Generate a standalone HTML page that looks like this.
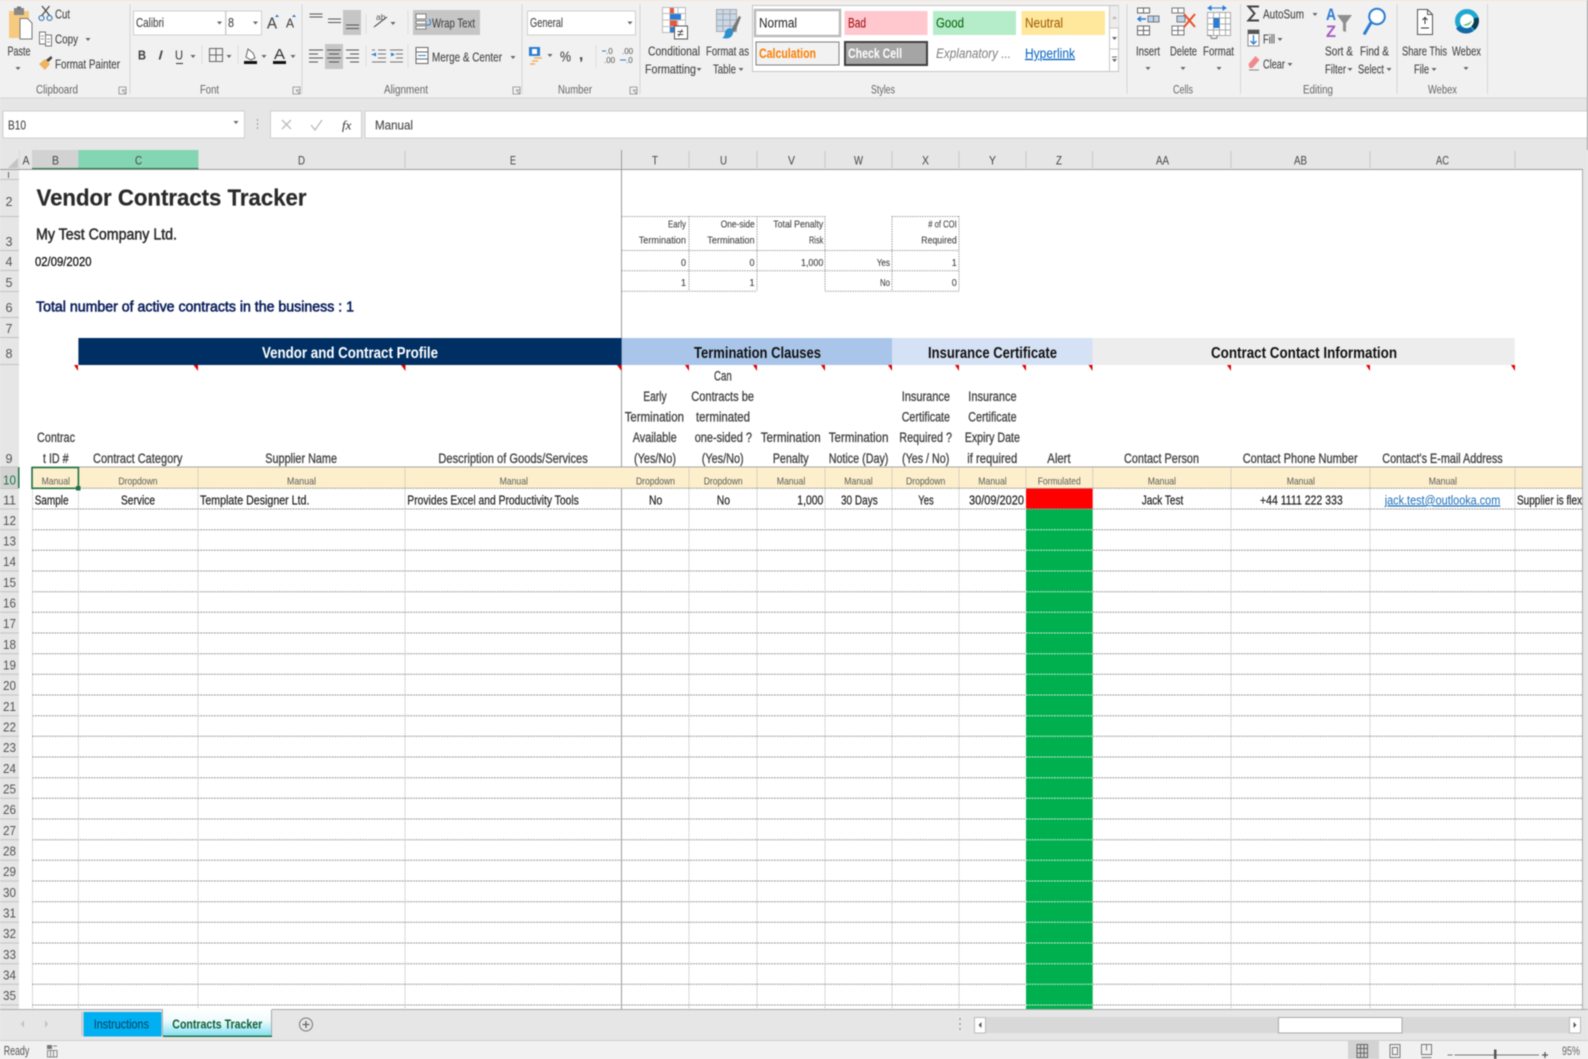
<!DOCTYPE html>
<html><head><meta charset="utf-8"><title>Vendor Contracts Tracker</title>
<style>
html,body{margin:0;padding:0;background:#f1f1f1;overflow:hidden}
svg{display:block;filter:blur(.4px)}
text{font-family:"Liberation Sans",Arial,sans-serif;white-space:pre;transform:translateY(-.2px)}
.r text{font-size:12.5px;fill:#444;stroke:#444;stroke-width:.1}
.lb text{font-size:11.5px;fill:#666}
.h text{font-size:12px;fill:#444}
.rn text{font-size:12.5px;fill:#555}
.hd text{font-size:13.5px;fill:#404040;stroke:#404040;stroke-width:.3}
.m text{font-size:10.5px;fill:#444;stroke:#444;stroke-width:.12}
.s text{font-size:10.5px;fill:#5a5a5a}
.d text{font-size:13px;fill:#222;stroke:#222;stroke-width:.2}
.sec text{font-size:16px;font-weight:bold;fill:#111}
</style></head><body>
<svg xmlns="http://www.w3.org/2000/svg" width="1588" height="1059" viewBox="0 0 1588 1059">
<defs>
<path id="a" d="M-2.5 0h5l-2.5 3z" fill="#666"/>
<path id="l" d="M0 0h7v7H0z M3 3h4 M3 3l4 4" fill="none" stroke="#888" stroke-width=".8"/>
</defs>
<!-- backgrounds -->
<rect width="1588" height="1059" fill="#f1f1f1"/>
<rect width="1588" height="1" fill="#f5e6da"/>
<rect y="98" width="1588" height="72" fill="#e6e6e6"/>
<rect y="97.500" width="1588" height="1" fill="#d4d4d4"/>
<rect x="3" y="111" width="241.500" height="27" fill="#fff" stroke="#cfcfcf"/>
<rect x="270.500" y="111" width="91" height="27" fill="#fff" stroke="#cfcfcf"/>
<rect x="365" y="111" width="1223" height="27" fill="#fff" stroke="#cfcfcf"/>
<!-- ribbon group separators -->
<path d="M130 4V94M302 4V94M522 4V94M640 4V94M1127 4V94M1240.500 4V94M1397 4V94M1487.500 4V94" stroke="#d6d6d6" fill="none"/>
<path d="M202 45V64M238 45V64M366 14V34M366 46V66M408 10V34M408 44V68M596 45V68" stroke="#dcdcdc" fill="none"/>
<rect x="1587" y="0" width="1" height="168" fill="#999"/>

<!-- clipboard icons -->
<rect x="9" y="11" width="20" height="27" fill="#f6ca80"/>
<rect x="14" y="8" width="10" height="7" fill="#888"/>
<rect x="17" y="6.500" width="4" height="3" fill="#777"/>
<path d="M20 18.500h7.500l4.500 4.500v16H20z" fill="#fff" stroke="#777"/>
<path d="M42 6l8 10M49.500 6l-8 10" stroke="#444" stroke-width="1.200" fill="none"/>
<circle cx="41.500" cy="18" r="2.500" fill="none" stroke="#2b6fb3" stroke-width="1.100"/>
<circle cx="49.500" cy="18" r="2.500" fill="none" stroke="#2b6fb3" stroke-width="1.100"/>
<path d="M39.500 32h6v12h-6zM45.500 35h6v11h-6z" fill="#fff" stroke="#777"/>
<path d="M41 36h3M41 39h3M47 39h3M47 42h3" stroke="#999"/>
<path d="M39 64l6-5 5 5-5 6z" fill="#eeb461"/>
<path d="M46 60l5-4 1.500 2-4 4z" fill="#444"/>

<!-- font controls -->
<rect x="133.500" y="11" width="92" height="24" fill="#fff" stroke="#cfcfcf"/>
<rect x="226" y="11" width="35.500" height="24" fill="#fff" stroke="#cfcfcf"/>
<rect x="527.500" y="11" width="108" height="24" fill="#fff" stroke="#cfcfcf"/>
<use href="#a" x="219.500" y="21.500"/><use href="#a" x="255.500" y="21.500"/><use href="#a" x="630" y="21.500"/>
<path d="M275 17l2-2.500 2 2.500zM292 17l2-2.500 2 2.500z" fill="#2b7cd3"/>

<!-- alignment highlights -->
<rect x="343" y="10" width="18" height="25" fill="#c6c6c6"/>
<rect x="325" y="44" width="18" height="25" fill="#c6c6c6"/>
<rect x="413" y="10" width="67" height="25" fill="#c6c6c6"/>
<path d="M309.500 14h13M309.500 17h13M328 19h13M328 22.500h13M346 25h13M346 28.500h13" stroke="#555" fill="none"/>
<path d="M309 50h14M309 54h9M309 58h14M309 62h9M327 50h14M329 54h10M327 58h14M329 62h10M346 50h13M350 54h9M346 58h13M350 62h9" stroke="#555" fill="none"/>
<text x="376" y="20" transform="rotate(-45 380 18)" style="font-size:8.500px" fill="#555">ab</text>
<path d="M374 27l13-10" stroke="#444" fill="none"/>
<use href="#a" x="393" y="22"/>
<path d="M416 14h10v5h-10zM416 21h10v3h-10zM416 26h10v3h-10z" fill="#fff" stroke="#666" stroke-width=".8"/>
<path d="M426 25h3c2 0 2-4 0-6" stroke="#2b7cd3" fill="none"/>
<path d="M378 50h8M378 54h8M378 58h8M372 62h14M372 50h3" stroke="#777" fill="none"/>
<path d="M376 52.500l-4 2 4 2z" fill="#2b7cd3"/><path d="M371.500 54.500h4" stroke="#2b7cd3"/>
<path d="M390 50h13M396 54h7M396 58h7M390 62h13" stroke="#777" fill="none"/>
<path d="M391 52.500l4 2-4 2z" fill="#2b7cd3"/>
<path d="M416 47.500h12v16h-12zM416 52h12M416 59h12" stroke="#666" fill="#fff"/>
<path d="M418 55.500h8" stroke="#2b7cd3"/>
<use href="#a" x="513" y="56"/>

<!-- font row 2 icons -->
<path d="M209.500 48.500h13v13h-13zM216 48.500v13M209.500 55h13" fill="none" stroke="#666"/>
<use href="#a" x="193" y="55"/><use href="#a" x="229" y="55"/><use href="#a" x="264" y="55"/><use href="#a" x="293" y="55"/>
<path d="M248 49l5 4 2 5-4 2-5-3z" fill="#fff" stroke="#666"/>
<rect x="244" y="61" width="13" height="3" fill="#111"/>
<rect x="273" y="61" width="13" height="3" fill="#111"/>
<text x="274" y="59" font-size="15" fill="#333" textLength="11" lengthAdjust="spacingAndGlyphs">A</text>
<path d="M176 63.500h7" stroke="#333"/>

<!-- number icons -->
<rect x="529" y="47" width="11" height="9" fill="#2b7cd3"/><rect x="532" y="49" width="5" height="5" fill="#fff"/>
<path d="M534 58h8M532 61h6M530 64h5" stroke="#eeb461" stroke-width="1.500"/>
<use href="#a" x="550" y="54"/>
<text x="606" y="54" font-size="8" fill="#555">.0</text><text x="604" y="63" font-size="8" fill="#555">.00</text>
<text x="622" y="54" font-size="8" fill="#555">.00</text><text x="626" y="63" font-size="8" fill="#555">.0</text>
<path d="M602 51h4M620 60h6" stroke="#2b7cd3"/>

<!-- Conditional formatting -->
<path d="M662.500 7.500h23v25h-23zM670 7.500v25M678 7.500v25M662.500 13.500h23M662.500 20h23M662.500 26.500h23" fill="#fff" stroke="#bbb"/>
<rect x="670" y="8" width="4" height="5.500" fill="#e8593c"/>
<rect x="670" y="14" width="11" height="5.500" fill="#2b7cd3"/>
<rect x="670" y="20.500" width="7" height="5.500" fill="#e8593c"/>
<rect x="670" y="27" width="4" height="5.500" fill="#2b7cd3"/>
<rect x="674.500" y="26" width="13" height="13" fill="#fff" stroke="#555"/>
<text x="677" y="37" font-size="12" fill="#333">≠</text>
<!-- Format as table -->
<path d="M716.500 9.500h20v22h-20zM723 9.500v22M730 9.500v22M716.500 14h20M716.500 20h20M716.500 26h20" fill="#c9d9ec" stroke="#aaa"/>
<path d="M731 30l8-14 2 1-6 15z" fill="#777"/>
<path d="M725 32c2-5 7-4 8-2 1 3-1 7-4 8-3 1-6 0-7 0 2-1 3-3 3-6z" fill="#2b8fd0"/>

<!-- Style gallery -->
<rect x="752.500" y="5.500" width="366" height="66" fill="#fff" stroke="#c6c6c6"/>
<rect x="755" y="10" width="85" height="26" fill="#fff" stroke="#bcbcbc" stroke-width="2.500"/>
<rect x="844.500" y="11" width="83" height="24" fill="#ffc7ce"/>
<rect x="933" y="11" width="83" height="24" fill="#b5ecca"/>
<rect x="1021.500" y="11" width="83.500" height="24" fill="#ffe79b"/>
<rect x="756" y="42" width="83" height="23" fill="#f2f2f2" stroke="#7f7f7f"/>
<rect x="845" y="42" width="82" height="23" fill="#a5a5a5" stroke="#3f3f3f" stroke-width="2"/>
<path d="M1109.500 5.500v66M1109.500 28h9.500M1109.500 49h9.500" stroke="#c6c6c6" fill="none"/>
<rect x="1110" y="6" width="8.500" height="21.500" fill="#ececec"/>
<path d="M1112 19l2.500-3 2.500 3z" fill="#bbb"/>
<use href="#a" x="1114.500" y="37"/>
<path d="M1112 57h5" stroke="#666"/><use href="#a" x="1114.500" y="59"/>

<!-- Cells icons -->
<path d="M1137.500 8h12v5h-12zM1143.500 8v5M1137.500 26h12v9h-12zM1143.500 26v9M1137.500 30.500h12" fill="#fff" stroke="#666"/>
<path d="M1148 16h11v6h-11zM1153.500 16v6" fill="#bcd5ee" stroke="#777"/>
<path d="M1146 19h-8M1141 16.500l-3 2.500 3 2.500" stroke="#2b7cd3" stroke-width="1.400" fill="none"/>
<path d="M1172 8h12v5h-12zM1178 8v5M1172 26h12v9h-12zM1178 26v9M1172 30.500h12" fill="#fff" stroke="#777"/>
<rect x="1177" y="16" width="8" height="6" fill="#bcd5ee" stroke="#777"/>
<path d="M1184 14l11 13M1195 14l-11 13" stroke="#e8502a" stroke-width="2" fill="none"/>
<path d="M1208 8h18M1208 8l3-2v4zM1226 8l-3-2v4z" stroke="#2b7cd3" fill="#2b7cd3"/>
<path d="M1207.500 12.500h23v23h-23zM1213.500 12.500v23M1219.500 12.500v23M1225.500 12.500v23M1207.500 18h23M1207.500 24h23M1207.500 30h23" fill="#fff" stroke="#aaa"/>
<rect x="1213.500" y="18" width="6" height="10" fill="#2b7cd3"/>
<path d="M1207.500 35.500h3l1 3h5l1-3" stroke="#777" fill="none"/>

<!-- Editing icons -->
<path d="M1259 6.500H1248.500L1254.500 13.500L1248.500 20.500H1259" stroke="#444" stroke-width="2" fill="none"/>
<use href="#a" x="1315" y="13"/>
<rect x="1248" y="30" width="11" height="16" fill="#fff" stroke="#888"/>
<rect x="1248" y="30" width="11" height="4" fill="#555"/>
<path d="M1253.500 35v9M1250.500 41l3 3 3-3" stroke="#2b7cd3" stroke-width="1.300" fill="none"/>
<use href="#a" x="1280" y="38"/>
<path d="M1248.500 64l7-8 4 4-7 8h-3z" fill="#f08a8a"/>
<path d="M1249 70h10" stroke="#888"/>
<use href="#a" x="1290" y="63"/>
<text x="1326" y="20" font-size="17" font-weight="bold" fill="#2b7cd3" textLength="10" lengthAdjust="spacingAndGlyphs">A</text>
<text x="1326" y="37" font-size="17" font-weight="bold" fill="#a45fc4" textLength="10" lengthAdjust="spacingAndGlyphs">Z</text>
<path d="M1337 15h15l-6 8v9l-3-1v-8z" fill="#8f8f8f"/>
<circle cx="1377" cy="16.500" r="7.800" fill="#fff" stroke="#2b7cd3" stroke-width="2"/>
<path d="M1371 22.500l-7 12" stroke="#2b7cd3" stroke-width="3" fill="none"/>

<!-- Share / Webex -->
<path d="M1417.500 9.500h10l5 5v20h-15z" fill="#fff" stroke="#555"/>
<path d="M1427.500 9.500v5h5" fill="none" stroke="#555"/>
<path d="M1425 24v-6M1422.500 20l2.500-2.500 2.500 2.500M1421 28h8" stroke="#333" fill="none"/>
<circle cx="1467" cy="21" r="9.500" fill="#fff" stroke="#20a9cf" stroke-width="5"/>
<path d="M1458 27a10 10 0 0 0 14 2" stroke="#1468a8" stroke-width="5" fill="none"/>
<path d="M1473 28a10 10 0 0 0 3-10" stroke="#0b3a52" stroke-width="5" fill="none"/>
<path d="M1463 25a6 6 0 0 0 7-1 8 8 0 0 0 2-4c-2 3-6 4-9 5z" fill="#6bbd6a"/>

<!-- ribbon arrows -->
<use href="#a" x="18" y="67"/><use href="#a" x="88" y="38"/>
<use href="#a" x="1148" y="67"/><use href="#a" x="1183" y="67"/><use href="#a" x="1219" y="67"/><use href="#a" x="1466" y="67"/>
<use href="#a" x="699" y="68"/><use href="#a" x="741" y="68"/><use href="#a" x="1350" y="68"/><use href="#a" x="1389" y="68"/><use href="#a" x="1434" y="68"/>
<use href="#l" x="119" y="87"/><use href="#l" x="293" y="87"/><use href="#l" x="513" y="87"/><use href="#l" x="630" y="87"/>

<!-- ribbon text -->
<g class="r">
<text x="55" y="18.500" textLength="15" lengthAdjust="spacingAndGlyphs">Cut</text>
<text x="55" y="43.500" textLength="23" lengthAdjust="spacingAndGlyphs">Copy</text>
<text x="55" y="68.500" textLength="65" lengthAdjust="spacingAndGlyphs">Format Painter</text>
<text x="7.500" y="55.500" textLength="23" lengthAdjust="spacingAndGlyphs">Paste</text>
<text x="136" y="27" textLength="28" lengthAdjust="spacingAndGlyphs">Calibri</text>
<text x="228" y="27" textLength="6" lengthAdjust="spacingAndGlyphs">8</text>
<text x="267" y="28.500" style="font-size:16px" textLength="10" lengthAdjust="spacingAndGlyphs">A</text>
<text x="286" y="27.500" style="font-size:13px" textLength="8" lengthAdjust="spacingAndGlyphs">A</text>
<text x="138" y="59.500" style="font-weight:bold" textLength="8" lengthAdjust="spacingAndGlyphs">B</text>
<text x="158" y="59.500" style="font-style:italic" textLength="5" lengthAdjust="spacingAndGlyphs">I</text>
<text x="175" y="59.500" textLength="8" lengthAdjust="spacingAndGlyphs">U</text>
<text x="432" y="27.500" textLength="43" lengthAdjust="spacingAndGlyphs">Wrap Text</text>
<text x="432" y="61.500" textLength="70" lengthAdjust="spacingAndGlyphs">Merge &amp; Center</text>
<text x="530" y="27" textLength="33" lengthAdjust="spacingAndGlyphs">General</text>
<text x="560" y="61.500" style="font-size:15px" textLength="11" lengthAdjust="spacingAndGlyphs">%</text>
<text x="579" y="59.500" style="font-size:15px;font-weight:bold">,</text>
<text x="648" y="55.500" textLength="52" lengthAdjust="spacingAndGlyphs">Conditional</text>
<text x="645" y="73.500" textLength="51" lengthAdjust="spacingAndGlyphs">Formatting</text>
<text x="706" y="55.500" textLength="43" lengthAdjust="spacingAndGlyphs">Format as</text>
<text x="713" y="73.500" textLength="23" lengthAdjust="spacingAndGlyphs">Table</text>
<text x="1136" y="55.500" textLength="24" lengthAdjust="spacingAndGlyphs">Insert</text>
<text x="1170" y="55.500" textLength="27" lengthAdjust="spacingAndGlyphs">Delete</text>
<text x="1203" y="55.500" textLength="31" lengthAdjust="spacingAndGlyphs">Format</text>
<text x="1263" y="18.500" textLength="41" lengthAdjust="spacingAndGlyphs">AutoSum</text>
<text x="1263" y="43.500" textLength="12" lengthAdjust="spacingAndGlyphs">Fill</text>
<text x="1263" y="68.500" textLength="22" lengthAdjust="spacingAndGlyphs">Clear</text>
<text x="1325" y="55.500" textLength="28" lengthAdjust="spacingAndGlyphs">Sort &amp;</text>
<text x="1325" y="73.500" textLength="21" lengthAdjust="spacingAndGlyphs">Filter</text>
<text x="1360" y="55.500" textLength="29" lengthAdjust="spacingAndGlyphs">Find &amp;</text>
<text x="1358" y="73.500" textLength="26" lengthAdjust="spacingAndGlyphs">Select</text>
<text x="1402" y="55.500" textLength="45" lengthAdjust="spacingAndGlyphs">Share This</text>
<text x="1414" y="73.500" textLength="15" lengthAdjust="spacingAndGlyphs">File</text>
<text x="1452" y="55.500" textLength="29" lengthAdjust="spacingAndGlyphs">Webex</text>
</g>
<!-- gallery text -->
<g>
<text x="759" y="27.500" style="font-size:13.500px" fill="#222" textLength="38" lengthAdjust="spacingAndGlyphs">Normal</text>
<text x="848" y="27.500" style="font-size:13.500px" fill="#9c0006" textLength="18" lengthAdjust="spacingAndGlyphs">Bad</text>
<text x="936" y="27.500" style="font-size:13.500px" fill="#006100" textLength="28" lengthAdjust="spacingAndGlyphs">Good</text>
<text x="1025" y="27.500" style="font-size:13.500px" fill="#9c5700" textLength="38" lengthAdjust="spacingAndGlyphs">Neutral</text>
<text x="759" y="58" style="font-size:13.500px;font-weight:bold" fill="#fa7d00" textLength="57" lengthAdjust="spacingAndGlyphs">Calculation</text>
<text x="848" y="58" style="font-size:13.500px;font-weight:bold" fill="#fff" textLength="54" lengthAdjust="spacingAndGlyphs">Check Cell</text>
<text x="936" y="58" style="font-size:13.500px;font-style:italic" fill="#7f7f7f" textLength="75" lengthAdjust="spacingAndGlyphs">Explanatory ...</text>
<text x="1025" y="58" style="font-size:13.500px;text-decoration:underline" fill="#0563c1" textLength="50" lengthAdjust="spacingAndGlyphs">Hyperlink</text>
</g>
<g class="lb">
<text x="36" y="93.500" textLength="42" lengthAdjust="spacingAndGlyphs">Clipboard</text>
<text x="200" y="93.500" textLength="19" lengthAdjust="spacingAndGlyphs">Font</text>
<text x="384" y="93.500" textLength="44" lengthAdjust="spacingAndGlyphs">Alignment</text>
<text x="558" y="93.500" textLength="34" lengthAdjust="spacingAndGlyphs">Number</text>
<text x="871" y="93.500" textLength="24" lengthAdjust="spacingAndGlyphs">Styles</text>
<text x="1173" y="93.500" textLength="20" lengthAdjust="spacingAndGlyphs">Cells</text>
<text x="1303" y="93.500" textLength="30" lengthAdjust="spacingAndGlyphs">Editing</text>
<text x="1428" y="93.500" textLength="29" lengthAdjust="spacingAndGlyphs">Webex</text>
</g>

<!-- formula bar -->
<g class="r">
<text x="8" y="129.500" style="font-size:13px" textLength="18" lengthAdjust="spacingAndGlyphs">B10</text>
<text x="375" y="129.500" style="font-size:13px" textLength="38" lengthAdjust="spacingAndGlyphs">Manual</text>
<text x="342" y="129.500" style="font-size:13px;font-style:italic;font-family:'Liberation Serif',serif">fx</text>
</g>
<use href="#a" x="236" y="121"/>
<path d="M257.500 119v2M257.500 123v2M257.500 127v2" stroke="#999"/>
<path d="M282 120l9 9M291 120l-9 9" stroke="#bbb" stroke-width="1.300"/>
<path d="M311 125l4 5 7-10" stroke="#bbb" stroke-width="1.300" fill="none"/>

<!-- sheet -->
<rect x="19" y="170" width="1563" height="839.500" fill="#fff"/>
<rect x="1582" y="150" width="6" height="860" fill="#e6e6e6"/>
<rect x="1582" y="169" width="1" height="841" fill="#aaa"/>
<!-- col headers -->
<rect x="32" y="150" width="46.400" height="19" fill="#d2d2d2"/>
<rect x="78.400" y="150" width="120" height="19" fill="#84d5b1"/>
<rect x="32" y="168" width="166.400" height="1.500" fill="#217346"/>
<path d="M8 168l10-10v10z" fill="#c4c4c4"/>
<path d="M405 151V168M689 151V168M757 151V168M825 151V168M892 151V168M959 151V168M1026 151V168M1092.500 151V168M1231 151V168M1370 151V168M1515 151V168" stroke="#c8c8c8" fill="none"/>
<path d="M621.500 150V1009" stroke="#9a9a9a" fill="none"/>
<rect x="0" y="169" width="1583" height="1" fill="#9a9a9a"/>
<rect x="19" y="150" width="0.500" height="19" fill="#ccc"/>
<g class="h">
<text x="22.500" y="164.500" textLength="7" lengthAdjust="spacingAndGlyphs">A</text>
<text x="52" y="164.500" textLength="7" lengthAdjust="spacingAndGlyphs">B</text>
<text x="135" y="164.500" textLength="7" lengthAdjust="spacingAndGlyphs">C</text>
<text x="298" y="164.500" textLength="7" lengthAdjust="spacingAndGlyphs">D</text>
<text x="510" y="164.500" textLength="6" lengthAdjust="spacingAndGlyphs">E</text>
<text x="652" y="164.500" textLength="6" lengthAdjust="spacingAndGlyphs">T</text>
<text x="720" y="164.500" textLength="7" lengthAdjust="spacingAndGlyphs">U</text>
<text x="788" y="164.500" textLength="7" lengthAdjust="spacingAndGlyphs">V</text>
<text x="854" y="164.500" textLength="9" lengthAdjust="spacingAndGlyphs">W</text>
<text x="922" y="164.500" textLength="7" lengthAdjust="spacingAndGlyphs">X</text>
<text x="989" y="164.500" textLength="7" lengthAdjust="spacingAndGlyphs">Y</text>
<text x="1056" y="164.500" textLength="6" lengthAdjust="spacingAndGlyphs">Z</text>
<text x="1156" y="164.500" textLength="13" lengthAdjust="spacingAndGlyphs">AA</text>
<text x="1294" y="164.500" textLength="13" lengthAdjust="spacingAndGlyphs">AB</text>
<text x="1436" y="164.500" textLength="13" lengthAdjust="spacingAndGlyphs">AC</text>
</g>
<!-- row header -->
<rect x="0" y="170" width="19" height="839.500" fill="#e6e6e6"/>
<rect x="0" y="467" width="19" height="21.300" fill="#d2d2d2"/>
<rect x="18" y="467" width="1.500" height="21.300" fill="#217346"/>
<path d="M0 179.500H19M0 216.500H19M0 250.500H19M0 270.500H19M0 291.500H19M0 317.500H19M0 337.500H19M0 364.500H19M0 467H19M0 488.500H19M0 509H19M0 529.700H19M0 550.300H19M0 571H19M0 591.700H19M0 612.300H19M0 633H19M0 653.700H19M0 674.300H19M0 695H19M0 715.700H19M0 736.300H19M0 757H19M0 777.700H19M0 798.300H19M0 819H19M0 839.700H19M0 860.300H19M0 881H19M0 901.700H19M0 922.300H19M0 943H19M0 963.700H19M0 984.300H19M0 1005H19" stroke="#c2c2c2" fill="none"/>
<path d="M8.500 172v6" stroke="#666"/>
<g class="rn">
<text x="5.500" y="206" textLength="7" lengthAdjust="spacingAndGlyphs">2</text>
<text x="5.500" y="246" textLength="7" lengthAdjust="spacingAndGlyphs">3</text>
<text x="5.500" y="266" textLength="7" lengthAdjust="spacingAndGlyphs">4</text>
<text x="5.500" y="287" textLength="7" lengthAdjust="spacingAndGlyphs">5</text>
<text x="5.500" y="312" textLength="7" lengthAdjust="spacingAndGlyphs">6</text>
<text x="5.500" y="333" textLength="7" lengthAdjust="spacingAndGlyphs">7</text>
<text x="5.500" y="358" textLength="7" lengthAdjust="spacingAndGlyphs">8</text>
<text x="5.500" y="463" textLength="7" lengthAdjust="spacingAndGlyphs">9</text>
<text x="3" y="484.500" style="fill:#217346" textLength="13" lengthAdjust="spacingAndGlyphs">10</text>
<text x="3" y="504.500" textLength="13" lengthAdjust="spacingAndGlyphs">11</text>
<text x="3" y="525" textLength="13" lengthAdjust="spacingAndGlyphs">12</text>
<text x="3" y="545.700" textLength="13" lengthAdjust="spacingAndGlyphs">13</text>
<text x="3" y="566.300" textLength="13" lengthAdjust="spacingAndGlyphs">14</text>
<text x="3" y="587" textLength="13" lengthAdjust="spacingAndGlyphs">15</text>
<text x="3" y="607.700" textLength="13" lengthAdjust="spacingAndGlyphs">16</text>
<text x="3" y="628.300" textLength="13" lengthAdjust="spacingAndGlyphs">17</text>
<text x="3" y="649" textLength="13" lengthAdjust="spacingAndGlyphs">18</text>
<text x="3" y="669.700" textLength="13" lengthAdjust="spacingAndGlyphs">19</text>
<text x="3" y="690.300" textLength="13" lengthAdjust="spacingAndGlyphs">20</text>
<text x="3" y="711" textLength="13" lengthAdjust="spacingAndGlyphs">21</text>
<text x="3" y="731.700" textLength="13" lengthAdjust="spacingAndGlyphs">22</text>
<text x="3" y="752.300" textLength="13" lengthAdjust="spacingAndGlyphs">23</text>
<text x="3" y="773" textLength="13" lengthAdjust="spacingAndGlyphs">24</text>
<text x="3" y="793.700" textLength="13" lengthAdjust="spacingAndGlyphs">25</text>
<text x="3" y="814.300" textLength="13" lengthAdjust="spacingAndGlyphs">26</text>
<text x="3" y="835" textLength="13" lengthAdjust="spacingAndGlyphs">27</text>
<text x="3" y="855.700" textLength="13" lengthAdjust="spacingAndGlyphs">28</text>
<text x="3" y="876.300" textLength="13" lengthAdjust="spacingAndGlyphs">29</text>
<text x="3" y="897" textLength="13" lengthAdjust="spacingAndGlyphs">30</text>
<text x="3" y="917.700" textLength="13" lengthAdjust="spacingAndGlyphs">31</text>
<text x="3" y="938.300" textLength="13" lengthAdjust="spacingAndGlyphs">32</text>
<text x="3" y="959" textLength="13" lengthAdjust="spacingAndGlyphs">33</text>
<text x="3" y="979.700" textLength="13" lengthAdjust="spacingAndGlyphs">34</text>
<text x="3" y="1000.300" textLength="13" lengthAdjust="spacingAndGlyphs">35</text>
</g>

<!-- section bars -->
<rect x="78.400" y="338" width="543.300" height="27" fill="#002f63"/>
<rect x="621.700" y="338" width="270.300" height="27" fill="#a9c5e9"/>
<rect x="892" y="338" width="200.700" height="27" fill="#d5e1f4"/>
<rect x="1092.700" y="338" width="422" height="27" fill="#ededed"/>
<g class="sec">
<text x="262" y="358" style="fill:#fff" textLength="176" lengthAdjust="spacingAndGlyphs">Vendor and Contract Profile</text>
<text x="694" y="358" textLength="127" lengthAdjust="spacingAndGlyphs">Termination Clauses</text>
<text x="928" y="358" textLength="129" lengthAdjust="spacingAndGlyphs">Insurance Certificate</text>
<text x="1211" y="358" textLength="186" lengthAdjust="spacingAndGlyphs">Contract Contact Information</text>
</g>
<path fill="#e00000" d="M74 365h4v6zM193.500 365h4.500v6zM401 365h4.500v6zM617 365h4.500v6zM685 365h4v6zM753 365h4v6zM821 365h4v6zM888 365h4v6zM955 365h4v6zM1022 365h4v6zM1088.500 365h4v6zM1227 365h4v6zM1366 365h4v6zM1511 365h4v6z"/>

<!-- title block -->
<text x="36.500" y="205.500" style="font-size:23.500px;font-weight:bold" fill="#2a2a2a" stroke="#2a2a2a" stroke-width=".2" textLength="270" lengthAdjust="spacingAndGlyphs">Vendor Contracts Tracker</text>
<text x="36" y="239.500" style="font-size:15.500px" fill="#2e2e2e" stroke="#2e2e2e" stroke-width=".5" textLength="141" lengthAdjust="spacingAndGlyphs">My Test Company Ltd.</text>
<text x="35" y="266" style="font-size:12.500px" fill="#111" stroke="#111" stroke-width=".25" textLength="56.500" lengthAdjust="spacingAndGlyphs">02/09/2020</text>
<text x="36" y="311.500" style="font-size:15px" fill="#0b1f5c" stroke="#0b1f5c" stroke-width=".6" textLength="318" lengthAdjust="spacingAndGlyphs">Total number of active contracts in the business : 1</text>

<!-- mini table -->
<path d="M621.700 216.500H825M892 216.500H959M621.700 250.500H959M621.700 270.700H959M621.700 291.300H757M825 291.300H959M689 216V291M757 216V291M825 216V291M892 216V291M959 216V291" stroke="#a0a0a0" stroke-dasharray="1.500 1" fill="none"/>
<g class="m">
<text x="668" y="227.500" textLength="18" lengthAdjust="spacingAndGlyphs">Early</text>
<text x="638.700" y="243.700" textLength="47.300" lengthAdjust="spacingAndGlyphs">Termination</text>
<text x="720.700" y="227.500" textLength="34" lengthAdjust="spacingAndGlyphs">One-side</text>
<text x="707.300" y="243.700" textLength="47.300" lengthAdjust="spacingAndGlyphs">Termination</text>
<text x="773.300" y="227.500" textLength="50" lengthAdjust="spacingAndGlyphs">Total Penalty</text>
<text x="809" y="243.700" textLength="14.300" lengthAdjust="spacingAndGlyphs">Risk</text>
<text x="928.300" y="227.500" textLength="28.400" lengthAdjust="spacingAndGlyphs"># of COI</text>
<text x="921.300" y="243.700" textLength="35.400" lengthAdjust="spacingAndGlyphs">Required</text>
<text x="681" y="266" textLength="5" lengthAdjust="spacingAndGlyphs">0</text>
<text x="749.500" y="266" textLength="5" lengthAdjust="spacingAndGlyphs">0</text>
<text x="801" y="266" textLength="22.300" lengthAdjust="spacingAndGlyphs">1,000</text>
<text x="876.700" y="266" textLength="13.300" lengthAdjust="spacingAndGlyphs">Yes</text>
<text x="951.700" y="266" textLength="5" lengthAdjust="spacingAndGlyphs">1</text>
<text x="681" y="286" textLength="5" lengthAdjust="spacingAndGlyphs">1</text>
<text x="749.500" y="286" textLength="5" lengthAdjust="spacingAndGlyphs">1</text>
<text x="880" y="286" textLength="10" lengthAdjust="spacingAndGlyphs">No</text>
<text x="951.700" y="286" textLength="5" lengthAdjust="spacingAndGlyphs">0</text>
</g>

<!-- row 9 header text -->
<g class="hd">
<text x="37" y="442.300" textLength="38" lengthAdjust="spacingAndGlyphs">Contrac</text>
<text x="43" y="463" textLength="25.600" lengthAdjust="spacingAndGlyphs">t ID #</text>
<text x="93" y="463" textLength="89.400" lengthAdjust="spacingAndGlyphs">Contract Category</text>
<text x="265.300" y="463" textLength="71.700" lengthAdjust="spacingAndGlyphs">Supplier Name</text>
<text x="438.400" y="463" textLength="149.400" lengthAdjust="spacingAndGlyphs">Description of Goods/Services</text>
<text x="643.300" y="401.300" textLength="23.300" lengthAdjust="spacingAndGlyphs">Early</text>
<text x="624.700" y="421.700" textLength="59.300" lengthAdjust="spacingAndGlyphs">Termination</text>
<text x="632.700" y="442.300" textLength="44" lengthAdjust="spacingAndGlyphs">Available</text>
<text x="634" y="463" textLength="42" lengthAdjust="spacingAndGlyphs">(Yes/No)</text>
<text x="714" y="380.700" textLength="17.700" lengthAdjust="spacingAndGlyphs">Can</text>
<text x="691.300" y="401.300" textLength="62.700" lengthAdjust="spacingAndGlyphs">Contracts be</text>
<text x="696" y="421.700" textLength="54" lengthAdjust="spacingAndGlyphs">terminated</text>
<text x="694.700" y="442.300" textLength="57.300" lengthAdjust="spacingAndGlyphs">one-sided ?</text>
<text x="701.700" y="463" textLength="42" lengthAdjust="spacingAndGlyphs">(Yes/No)</text>
<text x="760.700" y="442.300" textLength="60" lengthAdjust="spacingAndGlyphs">Termination</text>
<text x="772.700" y="463" textLength="36" lengthAdjust="spacingAndGlyphs">Penalty</text>
<text x="828.700" y="442.300" textLength="59.700" lengthAdjust="spacingAndGlyphs">Termination</text>
<text x="828.700" y="463" textLength="59.700" lengthAdjust="spacingAndGlyphs">Notice (Day)</text>
<text x="901.700" y="401.300" textLength="48.300" lengthAdjust="spacingAndGlyphs">Insurance</text>
<text x="901.700" y="421.700" textLength="48.300" lengthAdjust="spacingAndGlyphs">Certificate</text>
<text x="899.300" y="442.300" textLength="52.700" lengthAdjust="spacingAndGlyphs">Required ?</text>
<text x="902" y="463" textLength="47.300" lengthAdjust="spacingAndGlyphs">(Yes / No)</text>
<text x="968.300" y="401.300" textLength="48.300" lengthAdjust="spacingAndGlyphs">Insurance</text>
<text x="968.300" y="421.700" textLength="48.300" lengthAdjust="spacingAndGlyphs">Certificate</text>
<text x="964.700" y="442.300" textLength="55.300" lengthAdjust="spacingAndGlyphs">Expiry Date</text>
<text x="967.300" y="463" textLength="50" lengthAdjust="spacingAndGlyphs">if required</text>
<text x="1047.300" y="463" textLength="23.300" lengthAdjust="spacingAndGlyphs">Alert</text>
<text x="1124" y="463" textLength="75" lengthAdjust="spacingAndGlyphs">Contact Person</text>
<text x="1242.700" y="463" textLength="115" lengthAdjust="spacingAndGlyphs">Contact Phone Number</text>
<text x="1382.300" y="463" textLength="120.400" lengthAdjust="spacingAndGlyphs">Contact's E-mail Address</text>
</g>

<!-- row 10 band -->
<rect x="32" y="467" width="1550" height="21.300" fill="#fdefcb"/>
<!-- alert cells -->
<rect x="1026" y="488.300" width="66.700" height="20.700" fill="#ff0000"/>
<rect x="1026" y="509" width="66.700" height="500" fill="#00b04f"/>
<!-- grid -->
<path d="M32 467H1582" stroke="#a4a4a4" fill="none"/>
<path d="M32 488.300H1582M32 509H1582M32 529.700H1026M1092.700 529.700H1582M32 550.300H1026M1092.700 550.300H1582M32 571H1026M1092.700 571H1582M32 591.700H1026M1092.700 591.700H1582M32 612.300H1026M1092.700 612.300H1582M32 633H1026M1092.700 633H1582M32 653.700H1026M1092.700 653.700H1582M32 674.300H1026M1092.700 674.300H1582M32 695H1026M1092.700 695H1582M32 715.700H1026M1092.700 715.700H1582M32 736.300H1026M1092.700 736.300H1582M32 757H1026M1092.700 757H1582M32 777.700H1026M1092.700 777.700H1582M32 798.300H1026M1092.700 798.300H1582M32 819H1026M1092.700 819H1582M32 839.700H1026M1092.700 839.700H1582M32 860.300H1026M1092.700 860.300H1582M32 881H1026M1092.700 881H1582M32 901.700H1026M1092.700 901.700H1582M32 922.300H1026M1092.700 922.300H1582M32 943H1026M1092.700 943H1582M32 963.700H1026M1092.700 963.700H1582M32 984.300H1026M1092.700 984.300H1582M32 1005H1026M1092.700 1005H1582" stroke="#9c9c9c" stroke-dasharray="2 .8" fill="none"/>
<path d="M1026 529.700H1092.700M1026 550.300H1092.700M1026 571H1092.700M1026 591.700H1092.700M1026 612.300H1092.700M1026 633H1092.700M1026 653.700H1092.700M1026 674.300H1092.700M1026 695H1092.700M1026 715.700H1092.700M1026 736.300H1092.700M1026 757H1092.700M1026 777.700H1092.700M1026 798.300H1092.700M1026 819H1092.700M1026 839.700H1092.700M1026 860.300H1092.700M1026 881H1092.700M1026 901.700H1092.700M1026 922.300H1092.700M1026 943H1092.700M1026 963.700H1092.700M1026 984.300H1092.700M1026 1005H1092.700" stroke="#cfe9d8" stroke-dasharray="2 .8" fill="none"/>
<path d="M32.500 467V1009M78.400 467V1009M198 467V1009M405 467V1009M689 467V1009M757 467V1009M825 467V1009M892 467V1009M959 467V1009M1231 467V1009M1370 467V1009M1515 467V1009M1092.700 467V488M1026 467V488" stroke="#b4b4b4" stroke-dasharray="1 1" fill="none"/>
<!-- row 10 text -->
<g class="s">
<text x="41.600" y="484.500" textLength="28.400" lengthAdjust="spacingAndGlyphs">Manual</text>
<text x="118.400" y="484.500" textLength="39.200" lengthAdjust="spacingAndGlyphs">Dropdown</text>
<text x="287" y="484.500" textLength="29" lengthAdjust="spacingAndGlyphs">Manual</text>
<text x="499.600" y="484.500" textLength="28.400" lengthAdjust="spacingAndGlyphs">Manual</text>
<text x="636" y="484.500" textLength="39" lengthAdjust="spacingAndGlyphs">Dropdown</text>
<text x="703.700" y="484.500" textLength="39" lengthAdjust="spacingAndGlyphs">Dropdown</text>
<text x="776.700" y="484.500" textLength="28.600" lengthAdjust="spacingAndGlyphs">Manual</text>
<text x="844.300" y="484.500" textLength="28.400" lengthAdjust="spacingAndGlyphs">Manual</text>
<text x="906" y="484.500" textLength="39.300" lengthAdjust="spacingAndGlyphs">Dropdown</text>
<text x="978.300" y="484.500" textLength="28.400" lengthAdjust="spacingAndGlyphs">Manual</text>
<text x="1037.700" y="484.500" textLength="43" lengthAdjust="spacingAndGlyphs">Formulated</text>
<text x="1147.700" y="484.500" textLength="28.300" lengthAdjust="spacingAndGlyphs">Manual</text>
<text x="1286.700" y="484.500" textLength="28.300" lengthAdjust="spacingAndGlyphs">Manual</text>
<text x="1428.700" y="484.500" textLength="28.300" lengthAdjust="spacingAndGlyphs">Manual</text>
</g>
<!-- selection -->
<rect x="32" y="467.500" width="46.400" height="20.800" fill="none" stroke="#217346" stroke-width="1.600"/>
<rect x="76" y="486" width="4.500" height="4.500" fill="#217346"/>
<!-- row 11 text -->
<g class="d">
<text x="34.700" y="504.500" textLength="33.900" lengthAdjust="spacingAndGlyphs">Sample</text>
<text x="121" y="504.500" textLength="34" lengthAdjust="spacingAndGlyphs">Service</text>
<text x="200" y="504.500" textLength="109.400" lengthAdjust="spacingAndGlyphs">Template Designer Ltd.</text>
<text x="407.300" y="504.500" textLength="171.500" lengthAdjust="spacingAndGlyphs">Provides Excel and Productivity Tools</text>
<text x="649" y="504.500" textLength="13.300" lengthAdjust="spacingAndGlyphs">No</text>
<text x="716.700" y="504.500" textLength="13.300" lengthAdjust="spacingAndGlyphs">No</text>
<text x="797.300" y="504.500" textLength="26" lengthAdjust="spacingAndGlyphs">1,000</text>
<text x="841" y="504.500" textLength="36.700" lengthAdjust="spacingAndGlyphs">30 Days</text>
<text x="918.300" y="504.500" textLength="15.400" lengthAdjust="spacingAndGlyphs">Yes</text>
<text x="969" y="504.500" textLength="55" lengthAdjust="spacingAndGlyphs">30/09/2020</text>
<text x="1141.700" y="504.500" textLength="41.600" lengthAdjust="spacingAndGlyphs">Jack Test</text>
<text x="1260" y="504.500" textLength="82.700" lengthAdjust="spacingAndGlyphs">+44 1111 222 333</text>
<text x="1384.700" y="504.500" style="fill:#1d6fb8;stroke:none;text-decoration:underline" textLength="115.600" lengthAdjust="spacingAndGlyphs">jack.test@outlooka.com</text>
<text x="1517" y="504.500" textLength="65" lengthAdjust="spacingAndGlyphs">Supplier is flex</text>
</g>

<!-- tab bar -->
<rect x="0" y="1009.500" width="1588" height="31" fill="#e6e6e6"/>
<rect x="0" y="1009" width="1588" height="1" fill="#a8a8a8"/>
<rect x="0" y="1040" width="1588" height="19" fill="#f1f1f1"/>
<rect x="0" y="1040" width="1588" height="1" fill="#cfcfcf"/>
<path d="M24 1020l-3 4 3 4zM45 1020l3 4-3 4z" fill="#c4c4c4"/>
<rect x="81.500" y="1012" width="1" height="24" fill="#bbb"/>
<rect x="83.500" y="1012" width="78" height="24.500" fill="#00b0f0"/>
<defs><linearGradient id="tg" x1="0" y1="0" x2="0" y2="1"><stop offset="0" stop-color="#fff"/><stop offset=".45" stop-color="#eefbfd"/><stop offset="1" stop-color="#7fe0f2"/></linearGradient></defs>
<rect x="163" y="1009" width="108.500" height="27" fill="url(#tg)"/>
<path d="M162.500 1036V1010M271.500 1036V1010" stroke="#a8a8a8"/>
<rect x="163" y="1035.500" width="109" height="1.500" fill="#217346"/>
<text x="93.700" y="1028.500" style="font-size:13px" fill="#0a3d5e" textLength="55.300" lengthAdjust="spacingAndGlyphs">Instructions</text>
<text x="172.300" y="1028.500" style="font-size:13px;font-weight:bold" fill="#0e5f38" textLength="90" lengthAdjust="spacingAndGlyphs">Contracts Tracker</text>
<circle cx="306" cy="1024.500" r="6.500" fill="none" stroke="#777"/>
<path d="M302.500 1024.500h7M306 1021v7" stroke="#666" stroke-width="1.300"/>
<!-- scrollbar -->
<path d="M960 1018v2M960 1023v2M960 1028v2" stroke="#999" stroke-width="1.300"/>
<rect x="986" y="1017" width="583" height="16" fill="#d8d8d8"/>
<rect x="974.500" y="1017.500" width="11" height="15.500" fill="#fff" stroke="#bbb"/>
<rect x="1569.500" y="1017.500" width="11" height="15.500" fill="#fff" stroke="#bbb"/>
<path d="M981.500 1022l-3 3 3 3zM1573.500 1022l3 3-3 3z" fill="#555"/>
<rect x="1278.500" y="1017.500" width="123.500" height="15.500" fill="#fff" stroke="#aaa"/>
<!-- status bar -->
<text x="3.700" y="1055" style="font-size:12.500px" fill="#555" textLength="25.600" lengthAdjust="spacingAndGlyphs">Ready</text>
<rect x="47" y="1045" width="5" height="4" fill="#777"/>
<path d="M53 1046h4M47.500 1050.500h9.500v6.500h-9.500zM50.500 1050.500v6.500M53.500 1050.500v6.500" stroke="#888" fill="none"/>
<rect x="1348" y="1041" width="31" height="18" fill="#d3d3d3"/>
<path d="M1357 1044.500h10.500v13h-10.500zM1360.500 1044.500v13M1364 1044.500v13M1357 1048.500h10.500M1357 1053h10.500" stroke="#666" fill="none"/>
<path d="M1390 1044.500h10v13h-10zM1392.500 1047.500h5v7h-5z" stroke="#777" fill="none"/>
<path d="M1421.500 1044.500h10v10h-10zM1421.500 1057.500h10M1426.500 1044.500v6" stroke="#777" fill="none"/>
<path d="M1447.500 1055h5M1454.500 1055H1539" stroke="#777" fill="none"/>
<rect x="1494" y="1049.500" width="2.500" height="11" fill="#555"/>
<path d="M1542 1055h6M1545 1052v6" stroke="#555" stroke-width="1.200"/>
<text x="1562" y="1055" style="font-size:12px" fill="#666" textLength="18" lengthAdjust="spacingAndGlyphs">95%</text>
</svg>
</body></html>
